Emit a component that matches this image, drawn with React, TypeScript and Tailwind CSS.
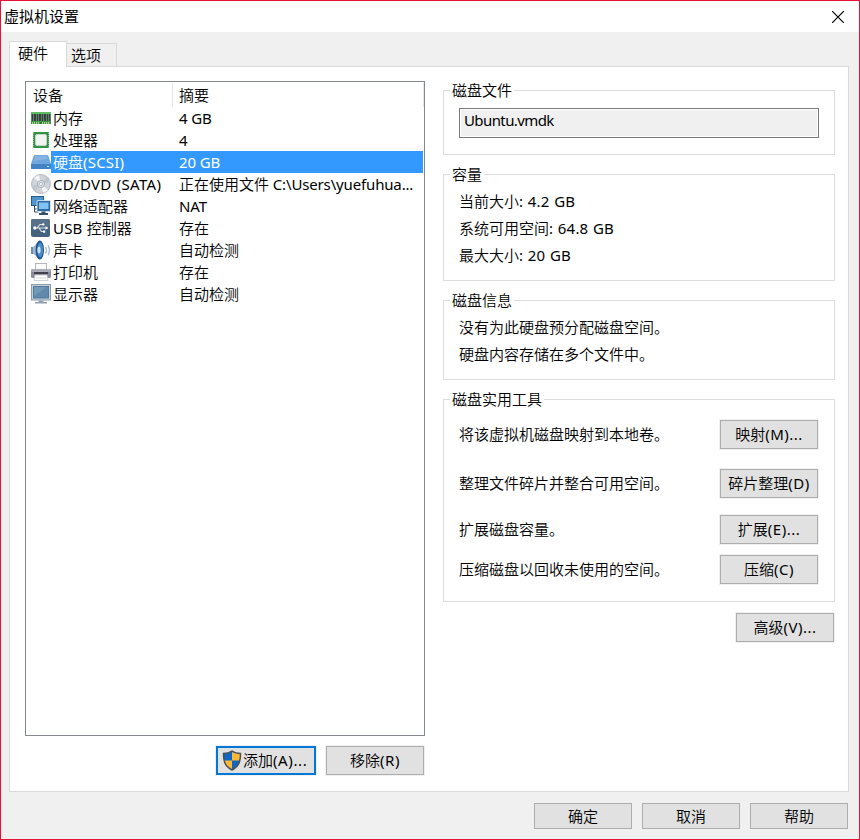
import React from 'react';

type IconProps = { children: React.ReactNode };

const Icon: React.FC<IconProps> = ({ children }) => (
  <svg width="20" height="20" viewBox="0 0 20 20" className="block shrink-0">
    {children}
  </svg>
);

const MemoryIcon = () => (
  <Icon>
    <rect x="0" y="4" width="20" height="12" fill="#3f9b47" />
    <rect x="0" y="4" width="20" height="2" fill="#5dbb62" />
    <rect x="1" y="6" width="4" height="7" fill="#3a3f42" />
    <rect x="6" y="6" width="4" height="7" fill="#3a3f42" />
    <rect x="11" y="6" width="4" height="7" fill="#3a3f42" />
    <rect x="16" y="6" width="3" height="7" fill="#3a3f42" />
    <path d="M2.5 6v7M7.5 6v7M12.5 6v7M17.5 6v7" stroke="#70747a" />
    <path d="M1 15h18" stroke="#e3d9a0" strokeWidth="1.6" strokeDasharray="1 1" />
    <rect x="9" y="14" width="2" height="2" fill="#2c7a36" />
  </Icon>
);

const CpuIcon = () => (
  <Icon>
    <rect x="2" y="2" width="16" height="16" rx="1" fill="#2f9443" />
    <path d="M2.5 3v14.5M17.5 3v14.5" stroke="#7cc887" strokeDasharray="1 1" />
    <rect x="4.5" y="4.5" width="11" height="11" rx="1.5" fill="#f2f4f2" stroke="#c3d6c5" />
  </Icon>
);

const DiskIcon = () => (
  <Icon>
    <path d="M4 3h12q1 0 1.4 1L20 12v4q0 1-1 1H1q-1 0-1-1v-4l2.600-8Q3 3 4 3z" fill="#6fa6db" />
    <path d="M4 4h12l1 3L3 9z" fill="#83b4e4" />
    <path d="M0 12h20v4q0 1-1 1H1q-1 0-1-1z" fill="#4383c4" />
    <rect x="16" y="14" width="2" height="1" fill="#c9e4fa" />
  </Icon>
);

const DiscIcon = () => (
  <Icon>
    <circle cx="10" cy="10" r="9.5" fill="#d0d4da" stroke="#a9afb8" strokeWidth="0.8" />
    <path d="M10 10L3 4A9 9 0 0 1 8 1.2zM10 10l7 6a9 9 0 0 1-5 2.8z" fill="#f2f4f6" />
    <path d="M10 10L1.2 12a9 9 0 0 0 3 5zM10 10l8.8-2a9 9 0 0 0-3-5z" fill="#bfc5ce" />
    <circle cx="10" cy="10" r="3.5" fill="#dfe3e8" stroke="#9ba5b1" strokeWidth="0.8" />
    <circle cx="10" cy="10" r="1.5" fill="#fff" stroke="#8f99a5" strokeWidth="0.6" />
  </Icon>
);

const NetworkIcon = () => (
  <Icon>
    <rect x="0.5" y="0.5" width="12" height="9" fill="#4f95cd" stroke="#275b8c" />
    <path d="M3.5 10v6h4M3.5 13h3" stroke="#3b4b5c" fill="none" />
    <rect x="6" y="4.500" width="13.500" height="11" rx="1" fill="#2d6ba3" stroke="#e6eef5" strokeWidth="0.8" />
    <rect x="8" y="6.500" width="9.500" height="6.500" fill="#82c4f1" />
    <path d="M10.500 15.500h4V17h2.500v2H8v-2h2.500z" fill="#34516e" />
  </Icon>
);

const UsbIcon = () => (
  <Icon>
    <rect x="0" y="1" width="19" height="18" rx="2" fill="#46627d" />
    <rect x="0" y="1" width="19" height="8" rx="2" fill="#577189" />
    <path d="M3 10h12M6 10l3-3.5h2.500M8 10l2.500 3.500h2.500" stroke="#dfe6ec" strokeWidth="1.1" fill="none" />
    <circle cx="3.8" cy="10" r="1.7" fill="#fff" />
    <path d="M14.500 8.200L17.500 10l-3 1.800z" fill="#fff" />
    <circle cx="12.200" cy="6.400" r="1.200" fill="#fff" />
    <rect x="12" y="12.500" width="2.200" height="2.200" fill="#fff" />
  </Icon>
);

const SoundIcon = () => (
  <Icon>
    <path d="M0 7h4v7H0z" fill="#6f8fae" />
    <path d="M2 7L9 0.500v19L2 13.500z" fill="#9db6cf" />
    <ellipse cx="8.800" cy="10" rx="4.200" ry="9.500" fill="#1d4f8a" />
    <ellipse cx="9.200" cy="10" rx="2.900" ry="7.500" fill="#4a8cca" />
    <ellipse cx="8" cy="10" rx="1.600" ry="3.600" fill="#c7e0f5" />
    <path d="M14.500 7c1 2 1 4.600 0 6.600M17 5.200c1.700 3 1.700 7 0 10" stroke="#9db6cf" strokeWidth="1.300" fill="none" />
  </Icon>
);

const PrinterIcon = () => (
  <Icon>
    <rect x="4.5" y="1.5" width="11" height="7" fill="#fafafa" stroke="#b5b5bb" />
    <rect x="0" y="7" width="20" height="9" rx="1.5" fill="#8b8d9b" />
    <rect x="0" y="7" width="20" height="3" rx="1.5" fill="#a9abb7" />
    <rect x="3" y="10" width="14" height="2" fill="#40414e" />
    <path d="M4 13h12l1 5.500H3z" fill="#fff" stroke="#bcbcc4" strokeWidth="0.7" />
    <path d="M5 16h10" stroke="#d6d6dd" />
  </Icon>
);

const DisplayIcon = () => (
  <Icon>
    <rect x="0.5" y="0.5" width="19" height="15.500" fill="#c5d1dc" stroke="#8a9dad" />
    <rect x="2.500" y="2.500" width="15" height="11.500" fill="#6089ab" stroke="#52799a" />
    <path d="M3 3h13L3 12z" fill="#7399b8" />
    <path d="M7.500 16.500h5V18H16v1.500H4V18h3.500z" fill="#8fa1b0" />
  </Icon>
);

const ShieldIcon = () => (
  <svg width="20" height="21" viewBox="0 0 20 21" className="block shrink-0">
    <path d="M10 1c2.5 1.8 5.500 2.500 8.500 2.500 0 8-1.500 13-8.500 16.500C3 16.500 1.500 11.500 1.500 3.500 4.500 3.500 7.500 2.800 10 1z" fill="#0f67c2" stroke="#4c4f52" strokeWidth="1.4" />
    <path d="M10 2v8.500H17c.5-2 .8-4 .8-6.300C15 4 12.500 3.400 10 2z" fill="#fdb932" />
    <path d="M10 10.500V19c-4-2-6.200-4.700-7.100-8.500z" fill="#fdb932" />
  </svg>
);

// Latin runs keep the regular weight and get their own spacing
const Label: React.FC<{ text: string; latin?: string }> = ({ text, latin = 'tracking-[0.2px] [word-spacing:0.5px]' }) => (
  <span className="whitespace-pre">
    {text.split(/([\x20-\x7e]+)/).map((part, i) =>
      i % 2 ? (
        <span key={i} className={`font-normal ${latin}`}>{part}</span>
      ) : (
        part
      )
    )}
  </span>
);

const Button: React.FC<{ text: string; className?: string }> = ({ text, className = 'h-[29px] ring-1 ring-[#f0f0f0]' }) => (
  <button className={`flex w-[98px] shrink-0 items-center justify-center border border-[#adadad] bg-[#e1e1e1] ${className}`}>
    <Label text={text} latin="tracking-[0.5px]" />
  </button>
);

const Group: React.FC<{ title: string; className: string; children: React.ReactNode }> = ({ title, className, children }) => (
  <fieldset className={`w-[392px] border border-[#dcdcdc] pl-[15px] ${className}`}>
    <legend className="ml-[-9px] h-[19px] pl-[2px] pr-[2px] leading-[19px]">{title}</legend>
    {children}
  </fieldset>
);

const devices = [
  { icon: <MemoryIcon />, name: '内存', summary: '4 GB' },
  { icon: <CpuIcon />, name: '处理器', summary: '4' },
  { icon: <DiskIcon />, name: '硬盘(SCSI)', summary: '20 GB', selected: true },
  { icon: <DiscIcon />, name: 'CD/DVD (SATA)', summary: '正在使用文件 C:\\Users\\yuefuhua...', path: true },
  { icon: <NetworkIcon />, name: '网络适配器', summary: 'NAT' },
  { icon: <UsbIcon />, name: 'USB 控制器', summary: '存在' },
  { icon: <SoundIcon />, name: '声卡', summary: '自动检测' },
  { icon: <PrinterIcon />, name: '打印机', summary: '存在' },
  { icon: <DisplayIcon />, name: '显示器', summary: '自动检测' },
];

const tools = [
  { text: '将该虚拟机磁盘映射到本地卷。', button: '映射(M)...', row: 'mb-[20px]' },
  { text: '整理文件碎片并整合可用空间。', button: '碎片整理(D)', row: 'mb-[17px]' },
  { text: '扩展磁盘容量。', button: '扩展(E)...', row: 'mb-[11px]' },
  { text: '压缩磁盘以回收未使用的空间。', button: '压缩(C)', row: '' },
];

const DeviceList = () => (
  <div className="h-[655px] w-[400px] border border-[#828790] bg-white pt-px">
    <div className="flex h-6">
      <div className="w-[147px] border-r border-[#e5e5e5] pl-[7px] leading-[24px]">设备</div>
      <div className="w-[251px] border-r border-[#e5e5e5] pl-[6px] leading-[24px]">摘要</div>
    </div>
    {devices.map((d) => (
      <div key={d.name} className="flex h-[22px] items-center pl-[5px] pr-px leading-[22px]">
        {d.icon}
        <div className={`flex h-[22px] flex-1 ${d.selected ? 'bg-[#3399ff] text-white' : ''}`}>
          <div className="w-[128px] pl-[2px]">
            <Label text={d.name} latin={d.path ? 'tracking-[0.3px] [word-spacing:1px]' : 'tracking-[0.2px]'} />
          </div>
          <div>
            <Label text={d.summary} latin={d.path ? 'tracking-[-0.15px]' : 'tracking-[-0.1px]'} />
          </div>
        </div>
      </div>
    ))}
  </div>
);

export default function App() {
  return (
    <div className="flex h-[840px] w-[860px] flex-col border border-[#e81238] bg-[#f0f0f0] font-['Noto_Sans','Noto_Sans_CJK_SC',sans-serif] text-[15px] font-[350] text-black">
      <header className="flex h-[31px] items-center justify-between bg-white pl-[3px] pr-[15px]">
        <h1 className="font-normal">虚拟机设置</h1>
        <svg width="12" height="12" viewBox="0 0 12 12">
          <path d="M0 0l12 12M12 0L0 12" stroke="#000" strokeWidth="1.2" />
        </svg>
      </header>

      <nav className="flex h-[34px] items-end pl-2">
        <div className="z-10 mb-[-1px] h-[26px] w-[58px] border border-b-0 border-[#d9d9d9] bg-white pl-2 leading-[23px]">硬件</div>
        <div className="h-[23px] w-[50px] border border-b-0 border-l-0 border-[#d9d9d9] pl-1 leading-[22px]">选项</div>
      </nav>

      <main className="ml-2 flex h-[726px] w-[840px] shrink-0 border border-[#d9d9d9] bg-white pl-[15px] pt-[14px]">
        <section className="w-[418px]">
          <DeviceList />
          <div className="mt-[10px] flex w-[399px] justify-end gap-[10px]">
            <button className="flex h-[29px] w-[100px] items-center border-2 border-[#0078d7] bg-[#e1e1e1] pl-1 ring-1 ring-[#f0f0f0]">
              <ShieldIcon />
              <span className="ml-px"><Label text="添加(A)..." latin="tracking-[0.6px]" /></span>
            </button>
            <Button text="移除(R)" />
          </div>
        </section>

        <section>
          <Group title="磁盘文件" className="h-[74px]">
            <div className="mt-2 h-[30px] w-[360px] border border-[#7a7a7a] bg-[#f0f0f0] pl-1 leading-[23px] shadow-[inset_0_0_0_1px_#fff]">
              <Label text="Ubuntu.vmdk" latin="tracking-[-0.6px]" />
            </div>
          </Group>
          <Group title="容量" className="mt-[10px] h-[116px]">
            <div className="mt-1 leading-[27px]">
              <p><Label text="当前大小: 4.2 GB" /></p>
              <p><Label text="系统可用空间: 64.8 GB" /></p>
              <p><Label text="最大大小: 20 GB" /></p>
            </div>
          </Group>
          <Group title="磁盘信息" className="mt-[10px] h-[89px]">
            <div className="mt-1 leading-[27px]">
              <p>没有为此硬盘预分配磁盘空间。</p>
              <p>硬盘内容存储在多个文件中。</p>
            </div>
          </Group>
          <Group title="磁盘实用工具" className="mt-[10px] h-[212px]">
            <div className="mt-[11px] pr-4">
              {tools.map((t) => (
                <div key={t.button} className={`flex h-[29px] items-center justify-between ${t.row}`}>
                  <span>{t.text}</span>
                  <Button text={t.button} />
                </div>
              ))}
            </div>
          </Group>
          <div className="mt-[11px] flex justify-end pr-px">
            <Button text="高级(V)..." />
          </div>
        </section>
      </main>

      <footer className="mt-[11px] flex justify-end gap-[10px] pr-[11px]">
        <Button text="确定" className="h-[26px]" />
        <Button text="取消" className="h-[26px]" />
        <Button text="帮助" className="h-[26px]" />
      </footer>
    </div>
  );
}
